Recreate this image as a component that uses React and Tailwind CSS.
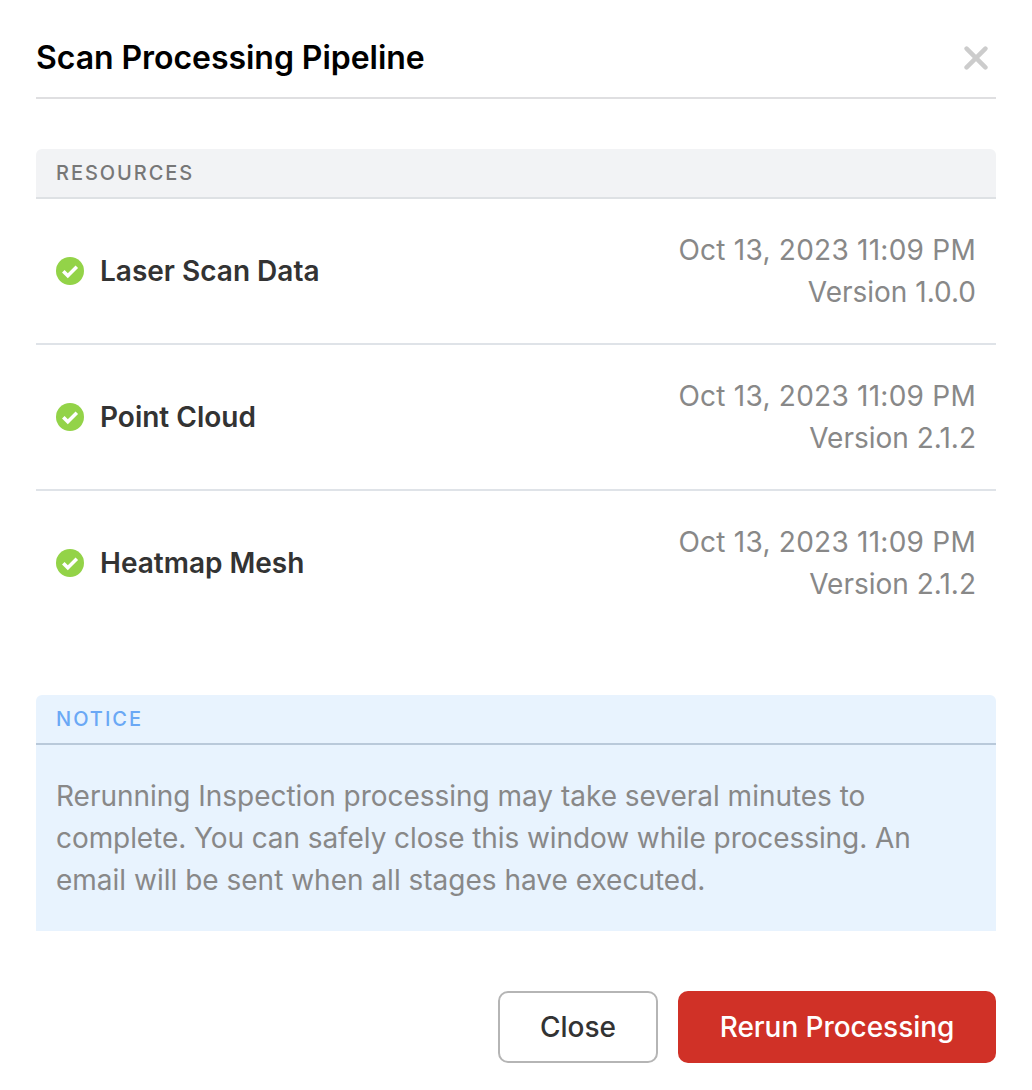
const resources = [
  { name: "Laser Scan Data", date: "Oct 13, 2023 11:09 PM", version: "Version 1.0.0" },
  { name: "Point Cloud", date: "Oct 13, 2023 11:09 PM", version: "Version 2.1.2" },
  { name: "Heatmap Mesh", date: "Oct 13, 2023 11:09 PM", version: "Version 2.1.2" },
];

function CheckBadge() {
  return (
    <svg className="mr-4 size-7 shrink-0" viewBox="0 0 28 28" fill="none">
      <circle cx="14" cy="14" r="14" fill="#93d348" />
      <path d="M7.3 14.2 L11.8 18.7 L20.8 9.8" stroke="#fff" strokeWidth="3.6" />
    </svg>
  );
}

export default function App() {
  return (
    <main className="flex h-[1090px] w-[1032px] flex-col bg-white px-9 font-['Inter',sans-serif] text-[#333333]">
      <header className="flex h-[99px] shrink-0 items-center justify-between border-b-2 border-[#dfdfe1] pt-[18px]">
        <h1 className="text-[32px] font-semibold leading-10 tracking-[-0.05px] text-black">Scan Processing Pipeline</h1>
        <button aria-label="Close dialog" className="mr-2">
          <svg className="size-6" viewBox="0 0 24 24" fill="none" stroke="#cccccc" strokeWidth="4.5" strokeLinecap="round">
            <path d="M2.6 2.6 L21.4 21.4 M21.4 2.6 L2.6 21.4" />
          </svg>
        </button>
      </header>

      <section className="mt-[50px]">
        <h2 className="h-[50px] rounded-t-md border-b-2 border-[#dee1e4] bg-[#f2f3f5] px-5 text-[20px] font-medium leading-[48px] tracking-[1.95px] text-[#777777]">RESOURCES</h2>
        {resources.map((item) => (
          <div key={item.name} className="flex h-[146px] items-center border-b-2 border-[#dfe3e8] px-5 last:border-transparent">
            <CheckBadge />
            <span className="text-[28px] font-semibold leading-[42px]">{item.name}</span>
            <div className="ml-auto text-right text-[28px] leading-[42px] text-[#888888]">
              <p className="tracking-[0.25px]">{item.date}</p>
              <p>{item.version}</p>
            </div>
          </div>
        ))}
      </section>

      <section className="mt-[58px] h-[236px] shrink-0 rounded-t-md bg-[#e8f3fe]">
        <h2 className="h-[50px] border-b-2 border-[#b9c9da] px-5 text-[20px] font-medium leading-[48px] tracking-[2px] text-[#6aa8f5]">NOTICE</h2>
        <p className="px-5 pt-[30px] text-[28px] leading-[42px] text-[#888888]">
          <span className="tracking-[-0.02px]">Rerunning Inspection processing may take several minutes to</span><br />
          <span className="tracking-[-0.08px]">complete. You can safely close this window while processing. An</span><br />
          email will be sent when all stages have executed.
        </p>
      </section>

      <footer className="mt-[60px] flex justify-end gap-5 text-[28px] font-medium">
        <button className="h-[72px] w-40 rounded-[10px] border-2 border-[#b5b5b5]">Close</button>
        <button className="h-[72px] w-[318px] rounded-[10px] bg-[#d03127] tracking-[-0.05px] text-white">Rerun Processing</button>
      </footer>
    </main>
  );
}
